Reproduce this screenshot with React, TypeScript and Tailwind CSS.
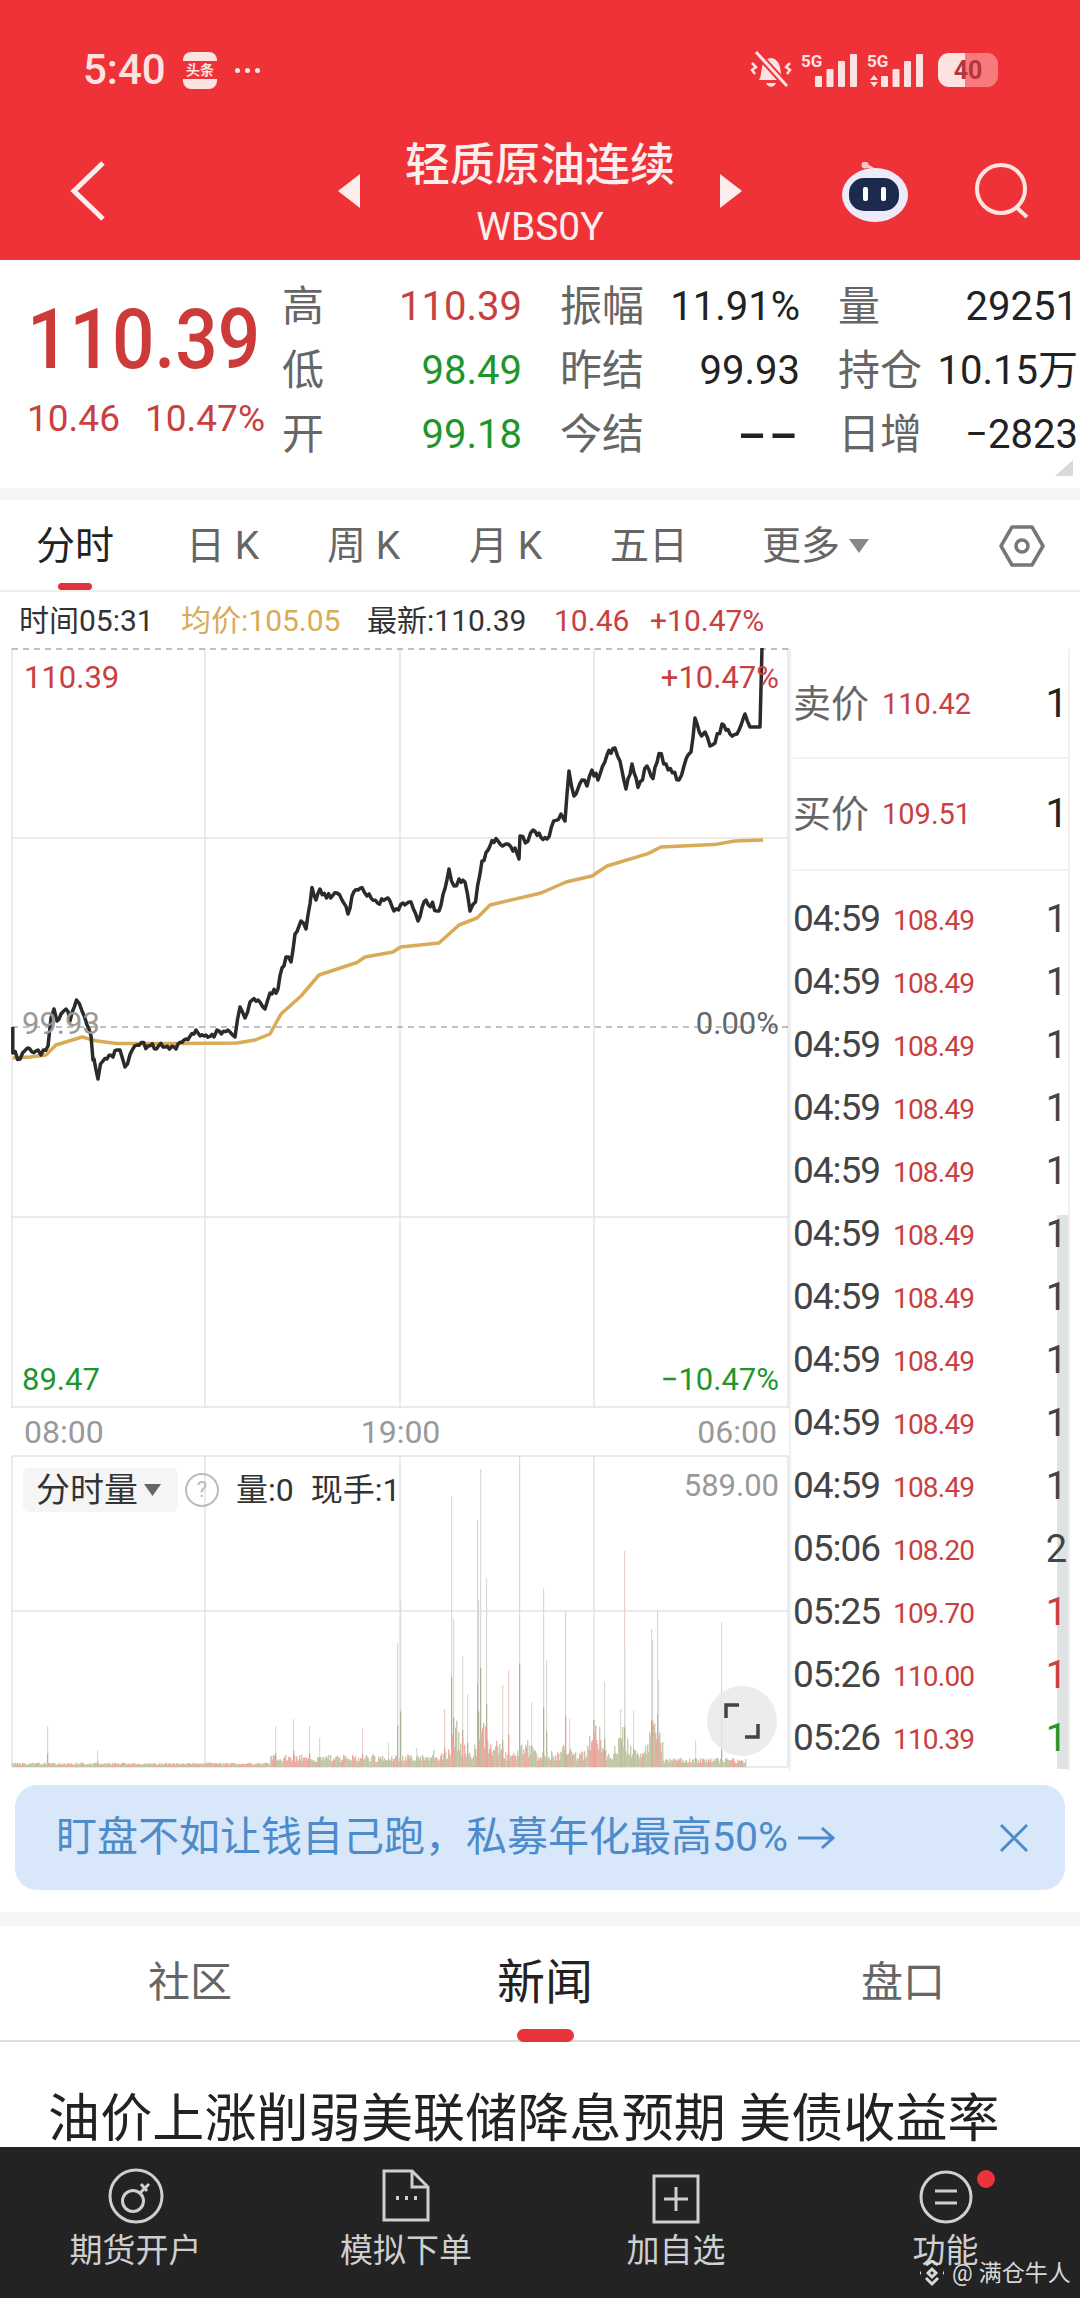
import React from "react";

const RED = "text-[#c8403f]";
const GREEN = "text-[#1f962b]";

let seed = 1337;
const rand = () => {
  seed = (seed * 16807) % 2147483647;
  return seed / 2147483647;
};

const pricePoints: number[][] = [
  [12.8, 1027], [12.8, 1053], [20, 1059], [25.5, 1050], [38, 1050], [41, 1055], [48, 1046], [51, 1018], [54, 1009], [57, 1021],
  [61, 1014], [66, 1009], [70, 1021], [76.5, 1000], [82, 1011], [87, 1025], [91, 1036], [93, 1060], [94, 1059], [98, 1079],
  [100.5, 1064], [107, 1059], [117, 1050], [120, 1050], [125, 1067], [130, 1054.5], [137, 1045], [148, 1046], [163, 1047], [176, 1049],
  [184, 1040], [186, 1039], [196, 1030], [204, 1036], [214, 1037], [217, 1030], [230, 1032], [235, 1037], [240, 1007], [245, 1018],
  [250, 1002], [258, 1000], [265, 1009], [270, 993], [278, 989], [282, 968], [286, 957], [291, 962], [295, 934], [301, 921],
  [306, 929], [312, 887.5], [316, 900], [320, 889], [326.5, 898], [337, 893], [342, 900], [348, 914], [352, 896], [362, 887.5],
  [367, 896], [377.5, 903], [388, 898], [394, 911], [403, 903], [411, 902], [418, 921], [426, 900], [439, 911], [449, 869],
  [454, 886], [459, 879], [465, 882], [470, 911], [475.5, 902], [482, 861], [490, 846], [496, 838.6], [502.5, 846], [515, 848],
  [519, 859], [520, 836], [525.5, 843], [533, 830], [541, 837.5], [547, 839], [553.6, 821], [561, 814], [565, 821], [569, 771],
  [574, 796], [582, 780], [587, 786], [592, 770], [598, 780], [607, 755], [615, 748], [620, 761], [626, 789], [632, 764],
  [638, 787.5], [647, 766], [653, 778.6], [659, 753.6], [666, 764], [679, 780], [684, 766], [691, 752], [695, 718], [701.5, 736],
  [705, 732], [710, 746], [715, 743], [722, 724], [730, 734], [737, 734], [745, 714], [750, 727], [760, 727], [762, 648],
];

const avgPoints: number[][] = [
  [12.8, 1058], [30, 1057], [46, 1055], [56, 1045], [82, 1037], [97, 1041], [117, 1043.5], [179, 1043.5], [237, 1043], [255, 1040],
  [270, 1034], [281, 1014], [301, 996], [319, 975], [357, 962.5], [365, 957], [393, 952], [400.5, 947], [439, 943], [459, 925],
  [477, 918], [490, 905], [541, 893], [566, 882], [592, 876], [607, 866], [648, 853.6], [661, 847], [714, 844.6], [735, 841], [763, 840],
];

const toPolyline = (pts: number[][]) => pts.map((p) => p.join(",")).join(" ");

// the tick data is noisy, so wiggle the hand-read points a bit
const roughen = (pts: number[][]) => {
  const out: number[][] = [];
  pts.forEach((p, i) => {
    out.push(p);
    const next = pts[i + 1];
    if (!next || i > pts.length - 4) return;
    const n = Math.floor((next[0] - p[0]) / 2);
    for (let k = 1; k < n; k++) {
      const t = k / n;
      const y = p[1] + (next[1] - p[1]) * t + (rand() - 0.5) * 7;
      out.push([p[0] + (next[0] - p[0]) * t, y]);
    }
  });
  return out;
};

const priceLine = roughen(pricePoints);

// tall spikes read off the volume chart: x, top y
const spikes: number[][] = [
  [47, 1726], [97, 1750], [275, 1726], [293, 1719], [309, 1726], [319, 1738], [362, 1728], [388, 1743], [397, 1643], [400, 1600],
  [416, 1748], [444, 1709], [451, 1496], [453, 1619], [462, 1656], [467, 1694], [477, 1520], [478, 1600], [480, 1469], [486, 1578],
  [502, 1685], [508, 1670], [519, 1456], [531, 1702], [543, 1588], [546, 1660], [565, 1612], [569, 1719], [594, 1719], [604, 1682],
  [620, 1709], [624, 1551], [624, 1648], [633, 1711], [651, 1629], [652, 1640], [657, 1610], [658, 1680], [695, 1740], [721, 1622],
];

// rough height of the low "mass" of bars at each x
const clusters: number[][] = [
  [456, 40], [483, 45], [497, 28], [525, 30], [565, 22], [595, 52], [622, 38], [654, 46],
];

const envelope = (x: number) => {
  if (x < 270) return 3;
  if (x < 432) return 10;
  if (x > 662) return 7;
  let h = 14;
  clusters.forEach(([cx, ch]) => {
    const d = Math.abs(x - cx);
    if (d < 11) h = Math.max(h, ch * (1 - d / 16));
  });
  return h;
};

type Bar = { x: number; top: number; red: boolean };

const makeBars = (): Bar[] => {
  const list: Bar[] = [];
  for (let x = 12; x < 746; x += 1) {
    const h = 1 + (0.35 + rand() * 0.8) * envelope(x);
    const pinkZone = (x > 475 && x < 495) || (x > 588 && x < 606) || (x > 290 && x < 310);
    list.push({ x, top: 1767 - h, red: rand() < (pinkZone ? 0.75 : 0.35) });
  }
  return list;
};

const bars = makeBars();

const trades = [
  ["04:59", "108.49", "1", "text-[#444]"],
  ["04:59", "108.49", "1", "text-[#444]"],
  ["04:59", "108.49", "1", "text-[#444]"],
  ["04:59", "108.49", "1", "text-[#444]"],
  ["04:59", "108.49", "1", "text-[#444]"],
  ["04:59", "108.49", "1", "text-[#444]"],
  ["04:59", "108.49", "1", "text-[#444]"],
  ["04:59", "108.49", "1", "text-[#444]"],
  ["04:59", "108.49", "1", "text-[#444]"],
  ["04:59", "108.49", "1", "text-[#444]"],
  ["05:06", "108.20", "2", "text-[#444]"],
  ["05:25", "109.70", "1", RED],
  ["05:26", "110.00", "1", RED],
  ["05:26", "110.39", "1", GREEN],
];

const quoteCells = [
  ["高", "110.39", RED],
  ["振幅", "11.91%", "text-[#222]"],
  ["量", "29251", "text-[#222]"],
  ["低", "98.49", GREEN],
  ["昨结", "99.93", "text-[#222]"],
  ["持仓", "10.15万", "text-[#222]"],
  ["开", "99.18", GREEN],
  ["今结", "--", "origin-right scale-x-[2] font-bold text-[#222]"],
  ["日增", "−2823", "text-[#222]"],
];

const Signal = ({ both }: { both?: boolean }) => (
  <svg width="56" height="36" viewBox="0 0 56 36" className="shrink-0">
    <text x="0" y="15" fontSize="17" fontWeight="700" fill="#fde2e2" fontFamily="Roboto">5G</text>
    {both && <path d="M3 28l4-5 4 5zM3 30l4 5 4-5z" fill="#fde2e2" />}
    <rect x="14" y="24" width="7" height="11" rx="1" fill="#fde2e2" />
    <rect x="25.5" y="17" width="7" height="18" rx="1" fill="#fde2e2" />
    <rect x="37" y="9" width="7" height="26" rx="1" fill="#fde2e2" />
    <rect x="49" y="2" width="7" height="33" rx="1" fill="#fde2e2" />
  </svg>
);

const StatusBar = () => (
  <div className="flex h-[44px] items-center pl-[83px] pr-[82px] text-[#fde2e2]">
    <span className="w-[100px] text-[42px] font-medium leading-none">5:40</span>
    <div className="flex h-[37px] w-[34px] items-center justify-center rounded-[8px] bg-[#fde2e2]">
      <span className="w-full bg-[#ee3237] py-[2px] text-center text-[14px] font-bold leading-none text-[#fde2e2]">头条</span>
    </div>
    <div className="ml-[18px] flex gap-[5px]">
      <i className="h-[5px] w-[5px] rounded-full bg-[#fde2e2]" />
      <i className="h-[5px] w-[5px] rounded-full bg-[#fde2e2]" />
      <i className="h-[5px] w-[5px] rounded-full bg-[#fde2e2]" />
    </div>
    <svg width="44" height="40" viewBox="0 0 44 40" className="ml-auto" fill="none" stroke="#fde2e2" strokeWidth="3">
      <path d="M10 30c2-3 2-8 3-13 1-5 5-9 9-9s8 4 9 9c1 5 1 10 3 13z" fill="#fde2e2" stroke="none" />
      <path d="M17 33c2 5 8 5 10 0z" fill="#fde2e2" stroke="none" />
      <path d="M7 2l31 34" stroke="#ee3237" strokeWidth="7" />
      <path d="M7 2l31 34" />
      <path d="M3 13l4 4-4 3 3 4M41 13l-4 4 4 3-3 4" strokeWidth="2.5" />
    </svg>
    <div className="ml-[8px]"><Signal /></div>
    <div className="ml-[10px]"><Signal both /></div>
    <div className="ml-[15px] flex h-[34px] w-[60px] items-center justify-center rounded-[11px] bg-[linear-gradient(90deg,#fde2e2_0%,#fde2e2_45%,#f87a7a_45%,#f87a7a_100%)] text-[25px] font-bold leading-none text-[#b5363a]">
      40
    </div>
  </div>
);

const NavBar = () => (
  <div className="mt-[41px] flex h-[116px] items-center pl-[70px]">
    <svg width="36" height="60" viewBox="0 0 36 60" fill="none" stroke="#fdeeee" strokeWidth="5">
      <path d="M33 2L4 30l29 28" />
    </svg>
    <svg width="22" height="34" viewBox="0 0 22 34" className="ml-[232px]">
      <path d="M22 0v34L0 17z" fill="#fdeeee" />
    </svg>
    <div className="flex w-[360px] flex-col items-center pt-[3px] text-[#fdeeee]">
      <span className="text-[45px] font-medium leading-[60px]">轻质原油连续</span>
      <span className="mt-[9px] text-[39px] leading-[44px]">WBS0Y</span>
    </div>
    <svg width="22" height="34" viewBox="0 0 22 34">
      <path d="M0 0v34l22-17z" fill="#fdeeee" />
    </svg>
    <svg width="68" height="62" viewBox="0 0 68 62" className="ml-[99px] mt-[3px]">
      <path d="M24 3c3 0 5 3 10 5" fill="none" stroke="#fbc9c9" strokeWidth="3" />
      <circle cx="24" cy="3" r="3.5" fill="#fbc9c9" />
      <ellipse cx="34" cy="33" rx="33" ry="27" fill="#ecebf9" />
      <rect x="8" y="16" width="50" height="33" rx="15" fill="#1d2a4d" />
      <rect x="22" y="25" width="5" height="14" rx="2" fill="#fff" />
      <rect x="40" y="25" width="5" height="14" rx="2" fill="#fff" />
    </svg>
    <svg width="56" height="58" viewBox="0 0 56 58" className="ml-[66px]" fill="none" stroke="#fde4e0" strokeWidth="4">
      <circle cx="26" cy="27" r="24" />
      <path d="M41 45l11 10" />
    </svg>
  </div>
);

const QuotePanel = () => (
  <div className="relative flex h-[228px] bg-white">
    <div className="flex w-[282px] flex-col pl-[27px]">
      <span className="mt-[31px] origin-left scale-x-[0.89] text-[84px] font-medium leading-[98px] text-[#cd3a3a]">110.39</span>
      <div className={`mt-[8px] flex w-[238px] justify-between text-[37px] leading-[44px] ${RED}`}>
        <span>10.46</span>
        <span>10.47%</span>
      </div>
    </div>
    <div className="grid grid-cols-[240px_240px_240px] content-start gap-x-[38px] pt-[15px]">
      {quoteCells.map(([label, value, color]) => (
        <div key={label} className="flex h-[64px] items-center justify-between">
          <span className="text-[42px] leading-none text-[#666]">{label}</span>
          <span className={`text-[40px] leading-none ${color}`}>{value}</span>
        </div>
      ))}
    </div>
    <svg width="18" height="16" viewBox="0 0 18 16" className="absolute right-[7px] top-[200px]">
      <path d="M18 0v16H0z" fill="#d9d9d9" />
    </svg>
  </div>
);

const tabs = [
  ["分时", "w-[150px] text-[#222]"],
  ["日 K", "w-[141px] text-[#666]"],
  ["周 K", "w-[142px] text-[#666]"],
  ["月 K", "w-[141px] text-[#666]"],
  ["五日", "w-[152px] text-[#666]"],
];

const ChartTabs = () => (
  <div className="relative flex h-[92px] items-center border-b-2 border-[#eeeeee] pl-[36px] pt-[2px] text-[39px] leading-none">
    {tabs.map(([label, cls]) => (
      <span key={label} className={cls}>{label}</span>
    ))}
    <span className="text-[#666]">更多</span>
    <svg width="20" height="14" viewBox="0 0 20 14" className="ml-[9px]">
      <path d="M0 0h20L10 14z" fill="#888" />
    </svg>
    <svg width="46" height="46" viewBox="0 0 46 46" className="ml-auto mr-[35px]" fill="none" stroke="#777" strokeWidth="3.5">
      <path d="M13 4h20l11 19-11 19H13L2 23z" strokeLinejoin="round" />
      <circle cx="23" cy="23" r="6" />
    </svg>
    <i className="absolute bottom-0 left-[58px] h-[7px] w-[34px] rounded-full bg-[#e0343a]" />
  </div>
);

const InfoRow = () => (
  <div className="flex h-[53px] items-center pl-[19px] pt-[5px] text-[30px] leading-none">
    <span className="w-[162px] text-[#333]">时间05:31</span>
    <span className="w-[186px] text-[#d9ab56]">均价:105.05</span>
    <span className="w-[187px] text-[#333]">最新:110.39</span>
    <span className={`w-[96px] ${RED}`}>10.46</span>
    <span className={RED}>+10.47%</span>
  </div>
);

const PriceChart = () => (
  <div className="relative h-[760px] w-[790px]">
    <svg width="790" height="760" viewBox="0 648 790 760" className="block">
      <g stroke="#e4e4e4" strokeWidth="1.5" fill="none">
        <path d="M12 648v760M205 648v760M400 648v760M594 648v760M788 648v760M12 838h776M12 1217h776M12 1407h776" />
      </g>
      <path d="M12 649h776M12 1027h776" stroke="#aaa" strokeWidth="1.5" strokeDasharray="6 5" fill="none" />
      <polyline points={toPolyline(avgPoints)} fill="none" stroke="#d9ab56" strokeWidth="3.5" strokeLinejoin="round" />
      <polyline points={toPolyline(priceLine)} fill="none" stroke="#2b2b2b" strokeWidth="3.5" strokeLinejoin="round" />
    </svg>
    <span className={`absolute left-[24px] top-[12px] text-[31px] leading-[36px] ${RED}`}>110.39</span>
    <span className={`absolute right-[11px] top-[12px] text-[31px] leading-[36px] ${RED}`}>+10.47%</span>
    <span className="absolute left-[22px] top-[358px] text-[31px] leading-[36px] text-[#999]">99.93</span>
    <span className="absolute right-[11px] top-[358px] text-[31px] leading-[36px] text-[#666]">0.00%</span>
    <span className={`absolute left-[22px] top-[714px] text-[31px] leading-[36px] ${GREEN}`}>89.47</span>
    <span className={`absolute right-[11px] top-[714px] text-[31px] leading-[36px] ${GREEN}`}>−10.47%</span>
  </div>
);

const VolumeChart = () => (
  <div className="relative h-[314px] w-[790px]">
    <svg width="790" height="314" viewBox="0 1455 790 314" className="block">
      <path d="M12 1456h776M12 1611h776M12 1767h776M12 1456v311M205 1456v311M400 1456v311M594 1456v311M788 1456v311" stroke="#e4e4e4" strokeWidth="1.5" fill="none" />
      {spikes.map(([x, top], i) => (
        <g key={i}>
          <rect x={x} y={top} width="1.2" height={1767 - top} fill={i % 5 === 1 ? "#edcfca" : "#dadcd3"} />
          <rect x={x} y={(top + 1767 * 2) / 3} width="1.2" height={(1767 - top) / 3} fill={i % 5 === 1 ? "#e89a94" : "#a9b597"} />
        </g>
      ))}
      {bars.map((b) => (
        <rect key={b.x} x={b.x} y={b.top} width="1.4" height={1767 - b.top} fill={b.red ? "#e9a198" : "#bcc3a0"} opacity="0.85" />
      ))}
    </svg>
    <div className="absolute left-[12px] top-[13px] flex items-center">
      <div className="ml-[11px] flex h-[44px] w-[155px] items-center rounded-[6px] bg-[#f5f5f5] pl-[13px] text-[34px] leading-none text-[#333]">
        分时量
        <svg width="17" height="12" viewBox="0 0 17 12" className="ml-[6px]">
          <path d="M0 0h17L8.5 12z" fill="#666" />
        </svg>
      </div>
      <div className="ml-[7px] flex h-[34px] w-[34px] items-center justify-center rounded-full border-2 border-[#bbb] text-[22px] leading-none text-[#bbb]">?</div>
      <span className="ml-[17px] text-[32px] leading-none text-[#333]">量:0</span>
      <span className="ml-[17px] text-[32px] leading-none text-[#333]">现手:1</span>
    </div>
    <span className="absolute right-[11px] top-[13px] text-[31px] leading-[36px] text-[#999]">589.00</span>
    <div className="absolute left-[707px] top-[231px] flex h-[70px] w-[70px] items-center justify-center rounded-full bg-[#e9e9e9]/85">
      <svg width="36" height="36" viewBox="0 0 36 36" fill="none" stroke="#444" strokeWidth="3.5">
        <path d="M2 15V2h13M34 21v13H21" />
      </svg>
    </div>
  </div>
);

const SidePanel = () => (
  <div className="relative mt-[1px] box-content h-[1122px] w-[277px] border-x-2 border-[#f0f0f0]">
    <div className="ml-[2px] flex h-[110px] items-center border-b-2 border-[#f2f2f2] pt-[2px]">
      <span className="w-[89px] text-[38px] leading-none text-[#666]">卖价</span>
      <span className={`text-[29px] leading-none ${RED}`}>110.42</span>
      <span className="ml-auto text-[40px] leading-none text-[#222]">1</span>
    </div>
    <div className="ml-[2px] flex h-[112px] items-center border-b-2 border-[#f2f2f2]">
      <span className="w-[89px] text-[38px] leading-none text-[#666]">买价</span>
      <span className={`text-[29px] leading-none ${RED}`}>109.51</span>
      <span className="ml-auto text-[40px] leading-none text-[#222]">1</span>
    </div>
    <div className="mt-[16px]">
      {trades.map(([time, price, qty, color], i) => (
        <div key={i} className="relative z-10 ml-[2px] flex h-[63px] items-center">
          <span className="w-[100px] text-[37px] leading-none tracking-[-1px] text-[#444]">{time}</span>
          <span className={`pt-[5px] text-[28px] leading-none tracking-[-0.8px] ${RED}`}>{price}</span>
          <span className={`ml-auto mr-[1px] text-[38px] leading-none ${color}`}>{qty}</span>
        </div>
      ))}
    </div>
    <i className="absolute bottom-[2px] right-0 top-[566px] w-[11px] bg-[#dfe3e3]" />
  </div>
);

const Banner = () => (
  <div className="mx-[15px] mt-[14px] flex h-[105px] items-center rounded-[22px] bg-[#d8e7fa] pl-[41px] pr-[36px] text-[41px] leading-none text-[#4d8bcb]">
    <span>盯盘不如让钱自己跑，私募年化最高50%</span>
    <svg width="38" height="26" viewBox="0 0 38 26" className="ml-[9px]" fill="none" stroke="#4d8bcb" strokeWidth="3">
      <path d="M1 13h34M25 3l11 10-11 10" />
    </svg>
    <svg width="30" height="30" viewBox="0 0 30 30" className="ml-auto" fill="none" stroke="#4d8bcb" strokeWidth="3">
      <path d="M2 2l26 26M28 2L2 28" />
    </svg>
  </div>
);

const NewsTabs = () => (
  <div className="relative flex h-[116px] items-center border-b-2 border-[#dddddd] bg-white leading-none">
    <span className="ml-[148px] text-[42px] text-[#666]">社区</span>
    <span className="ml-[265px] text-[48px] text-[#222]">新闻</span>
    <span className="ml-[268px] text-[42px] text-[#666]">盘口</span>
    <i className="absolute bottom-[-2px] left-[517px] h-[13px] w-[57px] rounded-full bg-[#e8343a]" />
  </div>
);

const navItems = [
  {
    label: "期货开户",
    cls: "w-[271px]",
    icon: (
      <svg width="56" height="56" viewBox="0 0 56 56" fill="none" stroke="#cfcfcf" strokeWidth="3">
        <circle cx="28" cy="28" r="26" />
        <circle cx="25" cy="33" r="10.5" />
        <path d="M32 25l9-9M33 16l6 7" />
      </svg>
    ),
  },
  {
    label: "模拟下单",
    cls: "w-[270px]",
    icon: (
      <svg width="48" height="56" viewBox="0 0 48 56" fill="none" stroke="#cfcfcf" strokeWidth="3">
        <path d="M2 3h28l16 16v33H2z" />
        <path d="M30 3v16h16" />
        <path d="M14 30h3M23 30h3M32 30h3" strokeWidth="4" />
      </svg>
    ),
  },
  {
    label: "加自选",
    cls: "w-[270px]",
    icon: (
      <svg width="48" height="50" viewBox="0 0 48 50" fill="none" stroke="#cfcfcf" strokeWidth="3">
        <path d="M2 2h44v46H2z" />
        <path d="M24 13v24M12 25h24" />
      </svg>
    ),
  },
  {
    label: "功能",
    cls: "w-[269px]",
    icon: (
      <svg width="54" height="54" viewBox="0 0 54 54" fill="none" stroke="#cfcfcf" strokeWidth="3">
        <circle cx="27" cy="27" r="25" />
        <path d="M16 21h22M16 33h22" />
      </svg>
    ),
  },
];

const BottomBar = () => (
  <div className="relative flex h-[153px] bg-[#232323] text-[#cfcfcf]">
    {navItems.map((item) => (
      <div key={item.label} className={`flex flex-col items-center ${item.cls}`}>
        <div className="mt-[17px] flex h-[60px] items-end justify-center">{item.icon}</div>
        <span className="mt-[7px] text-[33px] leading-[40px]">{item.label}</span>
      </div>
    ))}
    <i className="absolute left-[977px] top-[23px] h-[18px] w-[18px] rounded-full bg-[#e8343a]" />
    <div className="absolute left-[918px] top-[113px] flex items-center text-[23px] leading-none text-[#d8d8d8]">
      <svg width="28" height="27" viewBox="0 0 28 27" fill="none" stroke="#d8d8d8" strokeWidth="3">
        <path d="M8 5l6-4 6 4M2 13h1M25 13h1M8 18l6 6 6-6M10 13l4-4 4 4-4 4z" />
      </svg>
      <span className="ml-[6px]">@</span>
      <span className="ml-[6px]">满仓牛人</span>
    </div>
  </div>
);

export default function App() {
  return (
    <div className="h-[2298px] w-[1080px] overflow-hidden bg-white font-['Roboto','Noto_Sans_CJK_SC',sans-serif]">
      <div className="h-[260px] bg-[#ee3237] pt-[48px]">
        <StatusBar />
        <NavBar />
      </div>
      <QuotePanel />
      <div className="h-[12px] bg-[#f5f5f5]" />
      <ChartTabs />
      <InfoRow />
      <div className="flex pt-[3px]">
        <div className="w-[789px]">
          <PriceChart />
          <div className="flex h-[47px] items-center justify-between pl-[24px] pr-[12px] text-[32px] leading-none text-[#999]">
            <span>08:00</span>
            <span>19:00</span>
            <span>06:00</span>
          </div>
          <VolumeChart />
        </div>
        <SidePanel />
      </div>
      <Banner />
      <div className="mt-[22px] h-[14px] bg-[#f5f5f5]" />
      <NewsTabs />
      <div className="flex h-[105px] items-center pl-[48px] pt-[50px] text-[52px] leading-none tracking-[0.15px] text-[#222]">
        油价上涨削弱美联储降息预期 美债收益率
      </div>
      <BottomBar />
    </div>
  );
}
